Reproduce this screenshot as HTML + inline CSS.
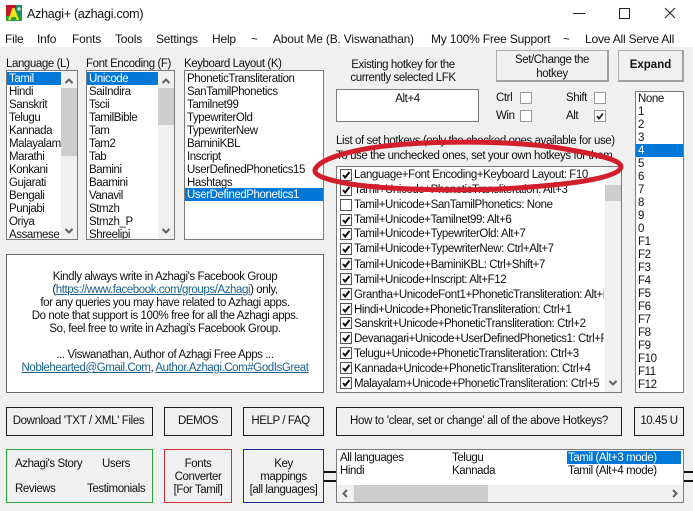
<!DOCTYPE html>
<html><head><meta charset="utf-8"><style>
html,body{margin:0;padding:0}
body{width:693px;height:511px;overflow:hidden;background:#f0f0f0;position:relative;font:11.5px/13px "Liberation Sans",sans-serif;letter-spacing:-.42px;color:#111}
.a{position:absolute;white-space:nowrap}
.m{top:32px;line-height:15px;font-size:12px;letter-spacing:-.2px}
.box{position:absolute;background:#fff;border:1px solid #7a7a7a;box-sizing:border-box;overflow:hidden}
.row{position:absolute;left:0;right:0;height:13px;padding-left:2px;white-space:nowrap;line-height:15px}
.sel{background:#0078d7;color:#fff}
.sb{position:absolute;top:0;bottom:0;width:16px;background:#f0f0f0}
.th{position:absolute;background:#cdcdcd}
.btn{position:absolute;box-sizing:border-box;border:1px solid #1c1c1c;background:#f0f0f0;display:flex;align-items:center;justify-content:center;text-align:center;white-space:nowrap}
.std{border:1px solid #adadad;border-right:2px solid #a0a0a0;border-bottom:2px solid #a0a0a0;background:#f0f0f0}
.cb{position:absolute;width:12px;height:12px;box-sizing:border-box;border:1px solid #999;background:#fff}
.hk{position:absolute;left:354px;width:250px;overflow:hidden;white-space:nowrap;height:16px;line-height:16px}
u{color:#1a5f8c}
</style></head><body>
<div class="a" style="left:0;top:0;width:693px;height:47px;background:#fff"></div>
<svg class="a" style="left:6px;top:5px" width="16" height="16"><rect width="16" height="16" fill="#c2182a"/><rect x="10" y="0" width="6" height="16" fill="#1c8f6a"/><rect x="0" y="11" width="16" height="5" fill="#26a040"/><path d="M2 15L6.500 3h2L13 15h-2.500l-.8-3H5.500l-.8 3z" fill="#f2e21e"/><path d="M11 4h4M13 2v4" stroke="#fff"/></svg>
<div class="a" style="left:27px;top:7px;font-size:12.5px;line-height:15px;letter-spacing:-.25px">Azhagi+ (azhagi.com)</div>
<svg class="a" style="left:565px;top:0" width="128" height="30" fill="none" stroke="#222"><path d="M8 13.500h12"/><rect x="54.500" y="8.500" width="10" height="10"/><path d="M100 8l10 10M110 8l-10 10"/></svg>
<div class="a m" style="left:5px">File</div>
<div class="a m" style="left:37px">Info</div>
<div class="a m" style="left:72px">Fonts</div>
<div class="a m" style="left:115px">Tools</div>
<div class="a m" style="left:156px">Settings</div>
<div class="a m" style="left:212px">Help</div>
<div class="a m" style="left:251px">~</div>
<div class="a m" style="left:273px">About Me (B. Viswanathan)</div>
<div class="a m" style="left:431px">My 100% Free Support</div>
<div class="a m" style="left:563px">~</div>
<div class="a m" style="left:585px">Love All Serve All</div>

<div class="a" style="left:6px;top:58px">Language (L)</div>
<div class="a" style="left:86px;top:58px">Font Encoding (F)</div>
<div class="a" style="left:184px;top:58px">Keyboard Layout (K)</div>

<div class="box" style="left:6px;top:70px;width:72px;height:170px">
<div class="row sel" style="top:1px;width:54px;right:auto">Tamil</div>
<div class="row" style="top:14px">Hindi</div><div class="row" style="top:27px">Sanskrit</div><div class="row" style="top:40px">Telugu</div><div class="row" style="top:53px">Kannada</div><div class="row" style="top:66px">Malayalam</div><div class="row" style="top:79px">Marathi</div><div class="row" style="top:92px">Konkani</div><div class="row" style="top:105px">Gujarati</div><div class="row" style="top:118px">Bengali</div><div class="row" style="top:131px">Punjabi</div><div class="row" style="top:144px">Oriya</div><div class="row" style="top:157px">Assamese</div>
<div class="sb" style="left:54px"><div class="th" style="left:0;top:17px;width:16px;height:68px"></div>
<svg class="a" style="left:0;top:0" width="16" height="168" fill="none" stroke="#606060" stroke-width="2"><path d="M4.500 12l3.500-3.500 3.500 3.500M4.500 158l3.500 3.500 3.500-3.500"/></svg></div>
</div>
<div class="box" style="left:86px;top:70px;width:89px;height:170px">
<div class="row sel" style="top:1px;width:71px;right:auto">Unicode</div>
<div class="row" style="top:14px">SaiIndira</div><div class="row" style="top:27px">Tscii</div><div class="row" style="top:40px">TamilBible</div><div class="row" style="top:53px">Tam</div><div class="row" style="top:66px">Tam2</div><div class="row" style="top:79px">Tab</div><div class="row" style="top:92px">Bamini</div><div class="row" style="top:105px">Baamini</div><div class="row" style="top:118px">Vanavil</div><div class="row" style="top:131px">Stmzh</div><div class="row" style="top:144px">Stmzh_P</div><div class="row" style="top:157px">Shreelipi</div>
<div class="sb" style="left:71px"><div class="th" style="left:0;top:17px;width:16px;height:37px"></div>
<svg class="a" style="left:0;top:0" width="16" height="168" fill="none" stroke="#606060" stroke-width="2"><path d="M4.500 12l3.500-3.500 3.500 3.500M4.500 158l3.500 3.500 3.500-3.500"/></svg></div>
</div>
<div class="box" style="left:184px;top:70px;width:140px;height:170px">
<div class="row" style="top:1px">PhoneticTransliteration</div><div class="row" style="top:14px">SanTamilPhonetics</div><div class="row" style="top:27px">Tamilnet99</div><div class="row" style="top:40px">TypewriterOld</div><div class="row" style="top:53px">TypewriterNew</div><div class="row" style="top:66px">BaminiKBL</div><div class="row" style="top:79px">Inscript</div><div class="row" style="top:92px">UserDefinedPhonetics15</div><div class="row" style="top:105px">Hashtags</div>
<div class="row sel" style="top:117px">UserDefinedPhonetics1</div>
</div>

<div class="a" style="left:340px;width:126px;top:59px;text-align:center">Existing hotkey for the<br>currently selected LFK</div>
<div class="box" style="left:336px;top:89px;width:143px;height:33px;text-align:center;padding-top:3px">Alt+4</div>
<div class="btn std" style="left:496px;top:50px;width:113px;height:32px;line-height:14px;padding-top:2px">Set/Change the<br>hotkey</div>
<div class="btn std" style="left:618px;top:50px;width:66px;height:32px;font-weight:bold;font-size:11.5px;letter-spacing:0">Expand</div>
<div class="a" style="left:496px;top:92px">Ctrl</div><div class="cb" style="left:520px;top:92px"></div>
<div class="a" style="left:496px;top:110px">Win</div><div class="cb" style="left:520px;top:110px"></div>
<div class="a" style="left:566px;top:92px">Shift</div><div class="cb" style="left:594px;top:92px"></div>
<div class="a" style="left:566px;top:110px">Alt</div><div class="cb" style="left:594px;top:110px"><svg width="10" height="10" style="display:block"><path d="M2 5l2 2.500 4-5" fill="none" stroke="#222" stroke-width="1.800"/></svg></div>

<div class="a" style="left:336px;top:135px">List of set hotkeys (only the checked ones available for use)</div>
<div class="a" style="left:336px;top:150px">To use the unchecked ones, set your own hotkeys for them</div>

<div class="box" style="left:336px;top:166px;width:286px;height:227px"></div>
<div class="a" style="left:605px;top:167px;width:16px;height:225px;background:#f0f0f0"></div>
<div class="a" style="left:605px;top:185px;width:16px;height:16px;background:#cdcdcd"></div>
<svg class="a" style="left:605px;top:375px" width="16" height="16" fill="none" stroke="#606060" stroke-width="2"><path d="M4.500 6l3.500 3.500 3.500-3.500"/></svg>

<div class="hk" style="top:167px">Language+Font Encoding+Keyboard Layout: F10</div>
<div class="hk" style="top:182px">Tamil+Unicode+PhoneticTransliteration: Alt+3</div>
<div class="hk" style="top:197px">Tamil+Unicode+SanTamilPhonetics: None</div>
<div class="hk" style="top:212px">Tamil+Unicode+Tamilnet99: Alt+6</div>
<div class="hk" style="top:226px">Tamil+Unicode+TypewriterOld: Alt+7</div>
<div class="hk" style="top:241px">Tamil+Unicode+TypewriterNew: Ctrl+Alt+7</div>
<div class="hk" style="top:257px">Tamil+Unicode+BaminiKBL: Ctrl+Shift+7</div>
<div class="hk" style="top:272px">Tamil+Unicode+Inscript: Alt+F12</div>
<div class="hk" style="top:287px">Grantha+UnicodeFont1+PhoneticTransliteration: Alt+I</div>
<div class="hk" style="top:302px">Hindi+Unicode+PhoneticTransliteration: Ctrl+1</div>
<div class="hk" style="top:316px">Sanskrit+Unicode+PhoneticTransliteration: Ctrl+2</div>
<div class="hk" style="top:331px">Devanagari+Unicode+UserDefinedPhonetics1: Ctrl+F</div>
<div class="hk" style="top:346px">Telugu+Unicode+PhoneticTransliteration: Ctrl+3</div>
<div class="hk" style="top:361px">Kannada+Unicode+PhoneticTransliteration: Ctrl+4</div>
<div class="hk" style="top:376px">Malayalam+Unicode+PhoneticTransliteration: Ctrl+5</div>
<svg class="a" style="left:339px;top:167px" width="14" height="226"><g fill="#fff" stroke="#555"><rect x="1.500" y="2.500" width="11" height="11"/><rect x="1.500" y="17.500" width="11" height="11"/><rect x="1.500" y="32.500" width="11" height="11"/><rect x="1.500" y="47.500" width="11" height="11"/><rect x="1.500" y="61.500" width="11" height="11"/><rect x="1.500" y="76.500" width="11" height="11"/><rect x="1.500" y="91.500" width="11" height="11"/><rect x="1.500" y="106.500" width="11" height="11"/><rect x="1.500" y="121.500" width="11" height="11"/><rect x="1.500" y="136.500" width="11" height="11"/><rect x="1.500" y="150.500" width="11" height="11"/><rect x="1.500" y="165.500" width="11" height="11"/><rect x="1.500" y="180.500" width="11" height="11"/><rect x="1.500" y="195.500" width="11" height="11"/><rect x="1.500" y="210.500" width="11" height="11"/></g>
<g fill="none" stroke="#111" stroke-width="2"><path d="M4 8l2.200 2.500L10.500 5M4 23l2.200 2.500L10.500 20M4 53l2.200 2.500L10.500 50M4 67l2.200 2.500L10.500 64M4 82l2.200 2.500L10.500 79M4 97l2.200 2.500L10.500 94M4 112l2.200 2.500L10.500 109M4 127l2.200 2.500L10.500 124M4 142l2.200 2.500L10.500 139M4 156l2.200 2.500L10.500 153M4 171l2.200 2.500L10.500 168M4 186l2.200 2.500L10.500 183M4 201l2.200 2.500L10.500 198M4 216l2.200 2.500L10.500 213"/></g></svg>

<div class="box" style="left:635px;top:91px;width:49px;height:302px">
<div class="row" style="top:0">None</div><div class="row" style="top:13px">1</div><div class="row" style="top:26px">2</div><div class="row" style="top:39px">3</div><div class="row sel" style="top:52px">4</div><div class="row" style="top:65px">5</div><div class="row" style="top:78px">6</div><div class="row" style="top:91px">7</div><div class="row" style="top:104px">8</div><div class="row" style="top:117px">9</div><div class="row" style="top:130px">0</div><div class="row" style="top:143px">F1</div><div class="row" style="top:156px">F2</div><div class="row" style="top:169px">F3</div><div class="row" style="top:182px">F4</div><div class="row" style="top:195px">F5</div><div class="row" style="top:208px">F6</div><div class="row" style="top:221px">F7</div><div class="row" style="top:234px">F8</div><div class="row" style="top:247px">F9</div><div class="row" style="top:260px">F10</div><div class="row" style="top:273px">F11</div><div class="row" style="top:286px">F12</div>
</div>

<svg class="a" style="left:0;top:0" width="693" height="511" fill="none"><path d="M315 170C318 160 345 151 385 146C440 140 520 141 565 149C600 155 621 160 621 167C620 176 585 183 530 187C470 192 390 190 350 184C328 180 314 176 315 170Z" stroke="#d31f2b" stroke-width="5"/></svg>

<div class="box" style="left:6px;top:254px;width:318px;height:139px;text-align:center;border-color:#666">
<div class="a" style="left:0;width:316px;top:16px;line-height:13px">Kindly always write in Azhagi's Facebook Group<br>(<u>https://www.facebook.com/groups/Azhagi</u>) only,<br>for any queries you may have related to Azhagi apps.<br>Do note that support is 100% free for all the Azhagi apps.<br>So, feel free to write in Azhagi's Facebook Group.<br><br>... Viswanathan, Author of Azhagi Free Apps ...<br><u>Noblehearted@Gmail.Com</u>, <u>Author.Azhagi.Com#GodIsGreat</u></div>
</div>

<div class="btn" style="left:6px;top:407px;width:147px;height:29px;letter-spacing:-.36px;padding-right:2px">Download 'TXT / XML' Files</div>
<div class="btn" style="left:164px;top:407px;width:68px;height:29px">DEMOS</div>
<div class="btn" style="left:243px;top:407px;width:81px;height:29px;padding-right:6px">HELP / FAQ</div>
<div class="btn" style="left:336px;top:407px;width:286px;height:29px;letter-spacing:-.33px">How to 'clear, set or change' all of the above Hotkeys?</div>
<div class="btn" style="left:634px;top:407px;width:50px;height:29px">10.45 U</div>

<div class="btn" style="left:6px;top:449px;width:147px;height:54px;border-color:#2ea43c"></div>
<div class="a" style="left:15px;top:458px">Azhagi's Story</div><div class="a" style="left:102px;top:458px">Users</div>
<div class="a" style="left:15px;top:483px">Reviews</div><div class="a" style="left:87px;top:483px">Testimonials</div>
<div class="btn" style="left:164px;top:449px;width:68px;height:54px;border-color:#c9303a;line-height:13px;padding-top:3px">Fonts<br>Converter<br>[For Tamil]</div>
<div class="btn" style="left:243px;top:449px;width:81px;height:54px;border-color:#1f2c8c;line-height:13px;padding-top:3px">Key<br>mappings<br>[all languages]</div>

<div class="a" style="left:324px;top:471px;width:12px;height:2px;background:#111"></div>
<div class="a" style="left:324px;top:480px;width:12px;height:2px;background:#111"></div>
<div class="a" style="left:684px;top:471px;width:9px;height:2px;background:#111"></div>
<div class="a" style="left:684px;top:480px;width:9px;height:2px;background:#111"></div>

<div class="box" style="left:336px;top:449px;width:348px;height:54px">
<div class="a" style="left:3px;top:2px">All languages</div><div class="a" style="left:3px;top:15px">Hindi</div>
<div class="a" style="left:115px;top:2px">Telugu</div><div class="a" style="left:115px;top:15px">Kannada</div>
<div class="a sel" style="left:230px;top:1px;width:114px;height:13px;padding-left:1px;box-sizing:border-box;line-height:15px">Tamil (Alt+3 mode)</div><div class="a" style="left:231px;top:15px">Tamil (Alt+4 mode)</div>
<div class="a" style="left:0;top:35px;width:346px;height:17px;background:#f0f0f0"></div>
<div class="th" style="left:17px;top:35px;width:134px;height:17px"></div>
<svg class="a" style="left:0;top:35px" width="346" height="17" fill="none" stroke="#606060" stroke-width="2"><path d="M10 5l-3.500 3.500 3.500 3.500M336 5l3.500 3.500-3.500 3.500"/></svg>
</div>
</body></html>
